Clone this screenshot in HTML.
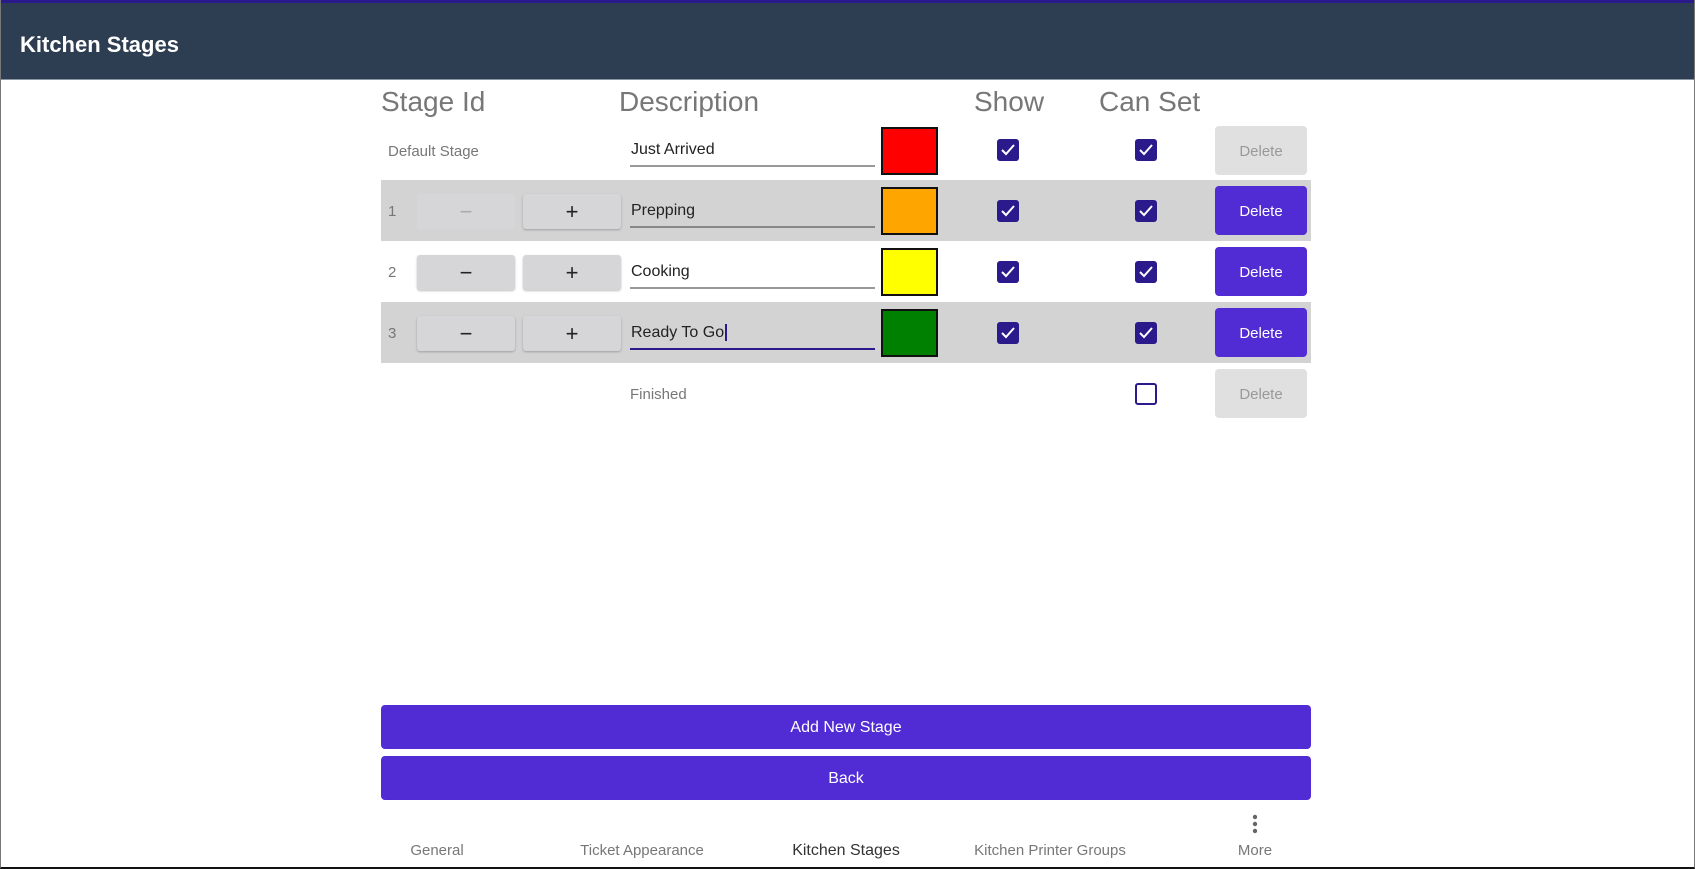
<!DOCTYPE html>
<html><head><style>
*{box-sizing:border-box;margin:0;padding:0}
body{width:1695px;height:869px;overflow:hidden;background:#fff;font-family:"Liberation Sans",sans-serif;position:relative}
.frame{position:absolute;left:0;top:0;width:1695px;height:869px;border:1px solid #777;border-top:none;border-bottom:2px solid #111}
.top{position:absolute;left:0;top:0;width:1695px;height:3px;background:#2a1a8c}
.hdr{position:absolute;left:0;top:3px;width:1695px;height:77px;background:#2e3e52;border-bottom:1px solid #8a95a3}
.hdr span{position:absolute;left:20px;top:29px;color:#fff;font-size:22px;font-weight:bold}
.ab{position:absolute}
.h{position:absolute;top:86px;font-size:28px;color:#777}
.row{position:absolute;left:381px;width:930px;height:61px}
.g{background:#d3d3d3}
.lbl{position:absolute;font-size:15px;color:#777}
.pm{position:absolute;width:98px;height:35px;background:#d6d6d8;border-radius:3px;box-shadow:0 1px 2px rgba(0,0,0,.25);text-align:center;line-height:35px;font-size:22px;color:#222}
.inp{position:absolute;left:249px;width:245px;height:34px;border-bottom:2px solid #999;font-size:16px;color:#222;padding-left:1px;line-height:34px}
.sw{position:absolute;left:500px;width:57px;height:48px;border:2px solid #111}
.cb{position:absolute;width:22px;height:22px;background:#2a1a8c;border-radius:3px}
.cb svg{position:absolute;left:3px;top:4px}
.del{position:absolute;left:834px;width:92px;height:49px;border-radius:4px;text-align:center;line-height:51px;font-size:15px}
.da{background:#512bd4;color:#fff}
.dd{background:#e0e0e0;color:#999}
.big{position:absolute;left:381px;width:930px;height:44px;background:#512bd4;border-radius:4px;color:#fff;text-align:center;line-height:46px;font-size:16px}
.nav{position:absolute;top:842px;font-size:15px;color:#777;transform:translateX(-50%);white-space:nowrap}
</style></head><body>
<div class="top"></div>
<div class="hdr"><span>Kitchen Stages</span></div>
<div class="h" style="left:381px">Stage Id</div>
<div class="h" style="left:619px">Description</div>
<div class="h" style="left:974px">Show</div>
<div class="h" style="left:1099px">Can Set</div>

<div class="row" style="top:120px">
 <div class="lbl" style="left:7px;top:23px">Default Stage</div>
 <div class="inp" style="top:13px">Just Arrived</div>
 <div class="sw" style="top:7px;background:#f00"></div>
 <div class="cb" style="left:616px;top:19px"><svg width="16" height="14"><path d="M2 7l4 4 8-9" stroke="#fff" stroke-width="2" fill="none"/></svg></div>
 <div class="cb" style="left:754px;top:19px"><svg width="16" height="14"><path d="M2 7l4 4 8-9" stroke="#fff" stroke-width="2" fill="none"/></svg></div>
 <div class="del dd" style="top:6px">Delete</div>
</div>
<div class="row g" style="top:180px">
 <div class="lbl" style="left:7px;top:23px">1</div>
 <div class="pm" style="left:36px;top:14px;background:#d6d6d8;box-shadow:none;color:#aaa">−</div>
 <div class="pm" style="left:142px;top:14px">+</div>
 <div class="inp" style="top:14px;border-color:#888">Prepping</div>
 <div class="sw" style="top:7px;background:#ffa500"></div>
 <div class="cb" style="left:616px;top:20px"><svg width="16" height="14"><path d="M2 7l4 4 8-9" stroke="#fff" stroke-width="2" fill="none"/></svg></div>
 <div class="cb" style="left:754px;top:20px"><svg width="16" height="14"><path d="M2 7l4 4 8-9" stroke="#fff" stroke-width="2" fill="none"/></svg></div>
 <div class="del da" style="top:6px">Delete</div>
</div>
<div class="row" style="top:241px">
 <div class="lbl" style="left:7px;top:23px">2</div>
 <div class="pm" style="left:36px;top:14px">−</div>
 <div class="pm" style="left:142px;top:14px">+</div>
 <div class="inp" style="top:14px">Cooking</div>
 <div class="sw" style="top:7px;background:#ff0"></div>
 <div class="cb" style="left:616px;top:20px"><svg width="16" height="14"><path d="M2 7l4 4 8-9" stroke="#fff" stroke-width="2" fill="none"/></svg></div>
 <div class="cb" style="left:754px;top:20px"><svg width="16" height="14"><path d="M2 7l4 4 8-9" stroke="#fff" stroke-width="2" fill="none"/></svg></div>
 <div class="del da" style="top:6px">Delete</div>
</div>
<div class="row g" style="top:302px">
 <div class="lbl" style="left:7px;top:23px">3</div>
 <div class="pm" style="left:36px;top:14px">−</div>
 <div class="pm" style="left:142px;top:14px">+</div>
 <div class="inp" style="top:14px;border-color:#2a1a8c">Ready To Go<span style="border-left:2px solid #2a1a8c;margin-left:1px"></span></div>
 <div class="sw" style="top:7px;background:#008000"></div>
 <div class="cb" style="left:616px;top:20px"><svg width="16" height="14"><path d="M2 7l4 4 8-9" stroke="#fff" stroke-width="2" fill="none"/></svg></div>
 <div class="cb" style="left:754px;top:20px"><svg width="16" height="14"><path d="M2 7l4 4 8-9" stroke="#fff" stroke-width="2" fill="none"/></svg></div>
 <div class="del da" style="top:6px">Delete</div>
</div>
<div class="row" style="top:363px">
 <div class="lbl" style="left:249px;top:23px">Finished</div>
 <div class="cb" style="left:754px;top:20px;background:#fff;border:2px solid #2a1a8c"></div>
 <div class="del dd" style="top:6px">Delete</div>
</div>

<div class="big" style="top:705px">Add New Stage</div>
<div class="big" style="top:756px">Back</div>

<div class="nav" style="left:437px">General</div>
<div class="nav" style="left:642px">Ticket Appearance</div>
<div class="nav" style="left:846px;color:#333;font-size:16px">Kitchen Stages</div>
<div class="nav" style="left:1050px">Kitchen Printer Groups</div>
<div class="nav" style="left:1255px">More</div>
<svg class="ab" style="left:1250px;top:814px" width="10" height="22"><circle cx="5" cy="3" r="2.2" fill="#666"/><circle cx="5" cy="10" r="2.2" fill="#666"/><circle cx="5" cy="17" r="2.2" fill="#666"/></svg>
<div class="frame"></div>
</body></html>
